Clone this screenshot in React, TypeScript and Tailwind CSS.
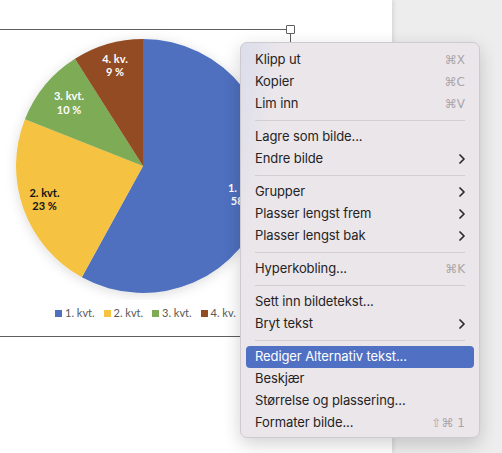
import React from "react";

type MenuEntry =
  | { label: string; shortcut?: string; sub?: boolean; active?: boolean }
  | "sep";

const menu: MenuEntry[] = [
  { label: "Klipp ut", shortcut: "⌘X" },
  { label: "Kopier", shortcut: "⌘C" },
  { label: "Lim inn", shortcut: "⌘V" },
  "sep",
  { label: "Lagre som bilde..." },
  { label: "Endre bilde", sub: true },
  "sep",
  { label: "Grupper", sub: true },
  { label: "Plasser lengst frem", sub: true },
  { label: "Plasser lengst bak", sub: true },
  "sep",
  { label: "Hyperkobling...", shortcut: "⌘K" },
  "sep",
  { label: "Sett inn bildetekst..." },
  { label: "Bryt tekst", sub: true },
  "sep",
  { label: "Rediger Alternativ tekst...", active: true },
  { label: "Beskjær" },
  { label: "Størrelse og plassering..." },
  { label: "Formater bilde...", shortcut: "⇧⌘ 1" },
];

const slices = [
  { value: 58, color: "#5070bf" },
  { value: 23, color: "#f5c242" },
  { value: 10, color: "#7dab56" },
  { value: 9, color: "#924c22" },
];

const legend = [
  { label: "1. kvt.", color: "#5070bf" },
  { label: "2. kvt.", color: "#f5c242" },
  { label: "3. kvt.", color: "#7dab56" },
  { label: "4. kv.", color: "#924c22" },
];

// datalabels: [x, y, line1, line2, colour]
const labels: [number, number, string, string, string][] = [
  [243, 157, "1. kvt.", "58 %", "#ffffff"],
  [44.5, 162, "2. kvt.", "23 %", "#111111"],
  [69, 65.5, "3. kvt.", "10 %", "#ffffff"],
  [115, 28, "4. kv.", "9 %", "#ffffff"],
];

function slicePath(cx: number, cy: number, r: number, from: number, to: number) {
  const a0 = (from / 100) * Math.PI * 2;
  const a1 = (to / 100) * Math.PI * 2;
  const x0 = cx + r * Math.sin(a0);
  const y0 = cy - r * Math.cos(a0);
  const x1 = cx + r * Math.sin(a1);
  const y1 = cy - r * Math.cos(a1);
  const large = to - from > 50 ? 1 : 0;
  return `M${cx},${cy} L${x0},${y0} A${r},${r} 0 ${large} 1 ${x1},${y1} Z`;
}

function PieChart() {
  const cx = 143;
  const cy = 136;
  const r = 127;
  let acc = 0;
  return (
    <svg width="290" height="270" className="block">
      <defs>
        <filter id="pieShadow" x="-20%" y="-20%" width="140%" height="140%">
          <feDropShadow dx="0" dy="2" stdDeviation="6" floodColor="#000" floodOpacity="0.14" />
        </filter>
      </defs>
      <g filter="url(#pieShadow)">
        {slices.map((s) => {
          const from = acc;
          acc += s.value;
          return <path key={s.color} d={slicePath(cx, cy, r, from, acc)} fill={s.color} />;
        })}
      </g>
      {labels.map(([x, y, l1, l2, c]) => (
        <g key={l1} fill={c} fontFamily="Lato, 'Open Sans', sans-serif" fontWeight="700" fontSize="11" textAnchor="middle">
          <text x={x} y={y} dominantBaseline="central">{l1}</text>
          <text x={x} y={y + 13.5} dominantBaseline="central">{l2}</text>
        </g>
      ))}
    </svg>
  );
}

function Chevron() {
  return (
    <svg width="6" height="10" viewBox="0 0 6 10" className="shrink-0">
      <polyline points="1,1 5,5 1,9" fill="none" stroke="#2a2a2a" strokeWidth="1.7" strokeLinecap="round" strokeLinejoin="round" />
    </svg>
  );
}

function ContextMenu() {
  return (
    <div className="absolute left-[240px] top-[42px] w-[240px] h-[396px] rounded-[7px] border border-[#cfcacf] bg-[#ebe6ea] bg-[linear-gradient(100deg,rgba(205,214,236,0.55)_0%,rgba(235,230,234,0)_14%)] shadow-[0_6px_18px_rgba(0,0,0,0.18)] pt-[6px] pb-[4px] font-['Inter',sans-serif] text-[13px] text-[#242424]">
      {menu.map((m, i) =>
        m === "sep" ? (
          <div key={i} className="h-[11px] flex items-center px-[14px]">
            <div className="h-px w-full bg-[#d3ced2]" />
          </div>
        ) : (
          <div
            key={i}
            className={`h-[22px] mx-[5px] px-[9px] flex items-center justify-between rounded-[4px] ${
              m.active ? "bg-[#5070c4] text-white" : ""
            }`}
          >
            <span className="tracking-[-0.1px]">{m.label}</span>
            {m.shortcut && (
              <span className="text-[#a9a5a9] font-['DejaVu_Sans',sans-serif] text-[12px]">{m.shortcut}</span>
            )}
            {m.sub && <Chevron />}
          </div>
        )
      )}
    </div>
  );
}

export default function App() {
  return (
    <div className="relative w-[502px] h-[453px] overflow-hidden flex bg-[#ededed]">
      <div className="w-[392px] h-full bg-white shadow-[1px_0_5px_rgba(0,0,0,0.12)] pt-[29px]">
        <div className="relative w-[291px] h-[308px] border-t border-r border-b border-[#5e5e5e]">
          <PieChart />
          <div className="mt-[6px] h-[14px] flex items-center pl-[55px] font-['Lato',sans-serif] text-[11px] text-[#595959]">
            {legend.map((l) => (
              <div key={l.label} className="w-[48.5px] shrink-0 flex items-center gap-[3px]">
                <span className="w-[7px] h-[7px] shrink-0" style={{ backgroundColor: l.color }} />
                <span>{l.label}</span>
              </div>
            ))}
          </div>
          <div className="absolute -top-[5px] -right-[5px] w-[9px] h-[9px] bg-white border border-[#5e5e5e] rounded-[1px]" />
        </div>
      </div>
      <ContextMenu />
    </div>
  );
}
